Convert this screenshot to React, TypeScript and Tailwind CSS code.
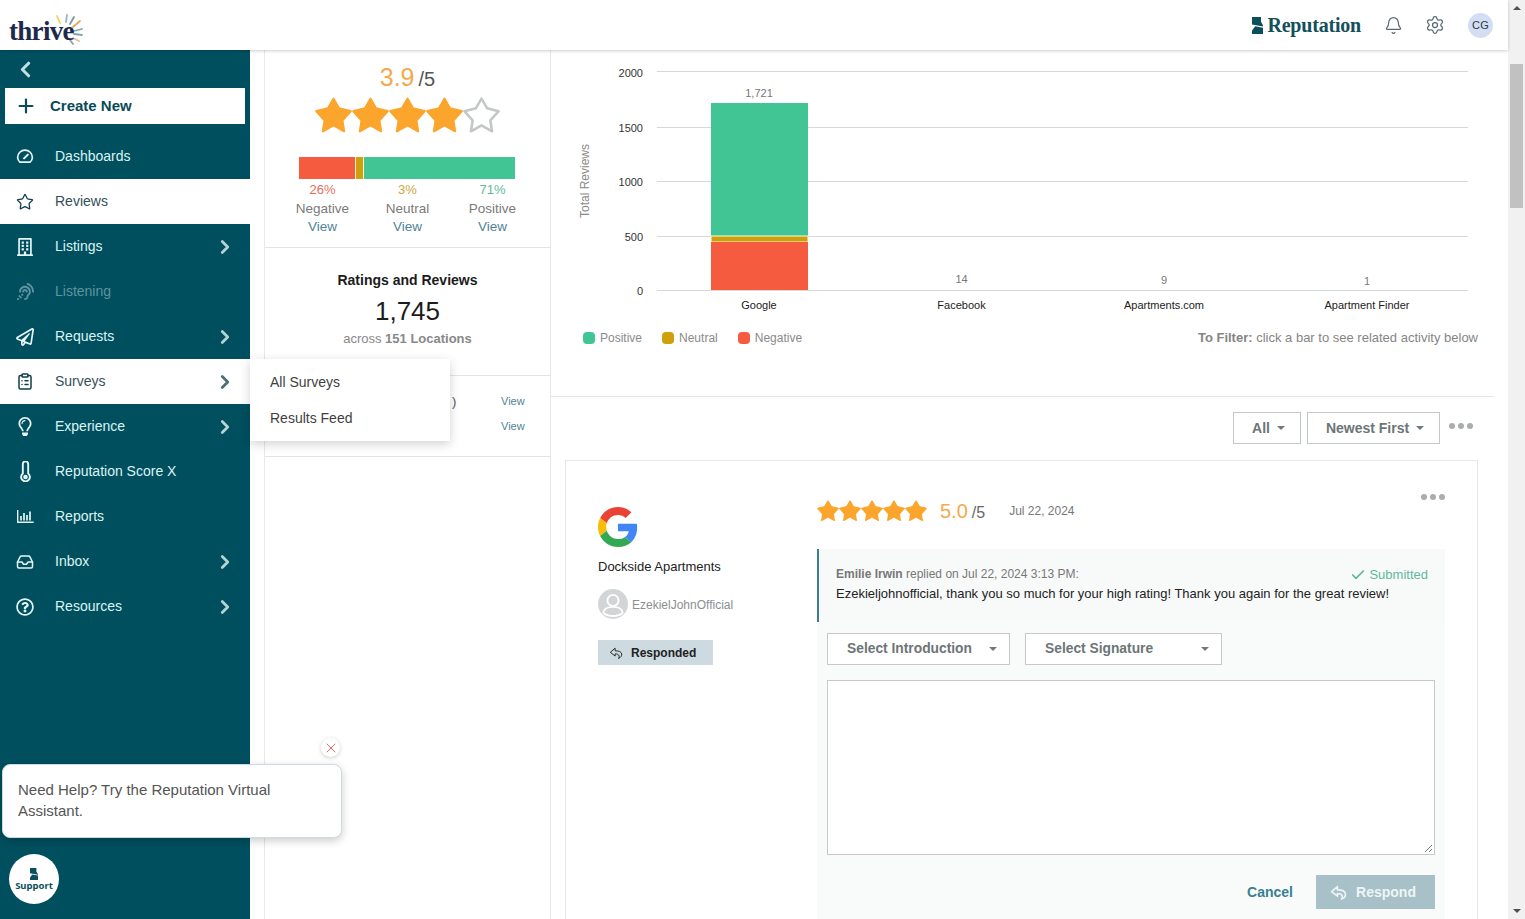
import React from "react";
import { Bell, Settings, ChevronLeft, ChevronRight, Plus, Star, ClipboardList, Check, X, Inbox } from "lucide-react";
import { FaAssistiveListeningSystems, FaRegPaperPlane, FaRegLightbulb, FaRegQuestionCircle, FaRegBuilding } from "react-icons/fa";

const STAR = "M12 2l3.23 5.55 6.77 1.71-4.83 5.44L18.17 21 12 17.5 5.83 21l.99-6.3L2 9.26l6.77-1.71z";

function RStar({ size, empty }: { size: number; empty?: boolean }) {
  return (
    <svg width={size} height={size} viewBox="1.2 1 21.6 21.6" className="shrink-0">
      <path d={STAR} fill={empty ? "none" : "#fca52d"} stroke={empty ? "#c4c7c8" : "#fca52d"} strokeWidth={empty ? 1.5 : 1.3} strokeLinejoin="round" />
    </svg>
  );
}

function RepMark({ h, color }: { h: number; color: string }) {
  return (
    <svg width={(h * 11) / 16} height={h} viewBox="0 0 11 16" className="shrink-0">
      <path d="M0 0H8.5V4.5L11 9 0 7z" fill={color} />
      <path d="M3 8.6L11 10.2V16H0V12.6z" fill={color} />
    </svg>
  );
}

function ReplyIcon({ size, sw }: { size: number; sw: number }) {
  return (
    <svg width={size} height={size} viewBox="0 0 16 16" fill="none" stroke="currentColor" strokeWidth={sw} strokeLinejoin="round" className="shrink-0">
      <path d="M7 2.5L1.5 7.2 7 11.5V9c2.6 0 4.2.7 4.6 2.5.2 1-.2 2-.8 2.7 2.8-1 4-3.1 3.7-5.2C14 6.500 11 5.500 7 5.500z" />
    </svg>
  );
}

function DashIcon() {
  return (
    <svg width="18" height="17" viewBox="0 0 18 18" fill="none" stroke="currentColor" strokeWidth="1.8">
      <path d="M3.6 15h10.800c1.600-1.300 2.400-3.100 2.400-5A7.800 7.800 0 0 0 1.200 10c0 1.900.8 3.700 2.400 5z" />
      <path d="M8 11l4-4" strokeWidth="2.2" strokeLinecap="round" />
    </svg>
  );
}

function ThermoIcon() {
  return (
    <svg width="17" height="21" viewBox="0 0 16 22" fill="none" stroke="currentColor" strokeWidth="2">
      <path d="M5.200 3.200a2.800 2.800 0 0 1 5.600 0v9.900a4.600 4.600 0 1 1-5.600 0z" />
      <circle cx="8" cy="16.800" r="2.400" fill="currentColor" stroke="none" />
    </svg>
  );
}

function ReportIcon() {
  return (
    <svg width="17" height="13" viewBox="0 0 17 13" fill="none" stroke="currentColor" strokeWidth="1.4">
      <path d="M.7 0v12.200h16" />
      <path d="M4 10.500V6M7 10.500V3M10 10.500V5M13 10.500V1.500" strokeWidth="1.700" />
    </svg>
  );
}

const NAV: { label: string; icon: React.ReactNode; arrow?: boolean; state?: "active" | "open" | "dim" }[] = [
  { label: "Dashboards", icon: <DashIcon /> },
  { label: "Reviews", icon: <Star size={18} strokeWidth={1.7} />, state: "active" },
  { label: "Listings", icon: <FaRegBuilding size={18} />, arrow: true },
  { label: "Listening", icon: <FaAssistiveListeningSystems size={17} />, state: "dim" },
  { label: "Requests", icon: <FaRegPaperPlane size={18} />, arrow: true },
  { label: "Surveys", icon: <ClipboardList size={19} strokeWidth={2} />, arrow: true, state: "open" },
  { label: "Experience", icon: <FaRegLightbulb size={19} />, arrow: true },
  { label: "Reputation Score X", icon: <ThermoIcon /> },
  { label: "Reports", icon: <ReportIcon /> },
  { label: "Inbox", icon: <Inbox size={18} strokeWidth={2} />, arrow: true },
  { label: "Resources", icon: <FaRegQuestionCircle size={18} />, arrow: true },
];

function Sidebar() {
  return (
    <aside className="w-[250px] shrink-0 bg-[#004f5f] flex flex-col">
      <div className="h-[38px] flex items-center pl-[13px] text-[#bfe0e2]">
        <ChevronLeft size={25} strokeWidth={3} />
      </div>
      <button className="h-[36px] mx-[5px] bg-white flex items-center pl-[10px] text-[#0b4a58] font-bold text-[15px] cursor-default">
        <Plus size={22} strokeWidth={2.4} className="mr-[13px]" />
        Create New
      </button>
      <nav className="mt-[10px] flex flex-col">
        {NAV.map((n) => {
          const light = n.state === "active" || n.state === "open";
          const tone = light ? "bg-white text-[#33505a]" : n.state === "dim" ? "text-[#5f939e]" : "text-[#dcf3f3]";
          const iconTone = light ? "text-[#0f3f4c]" : n.state === "dim" ? "text-[#5f939e]" : "text-[#e6f6f6]";
          return (
            <div key={n.label} className={`h-[45px] flex items-center text-[14px] ${tone}`}>
              <span className={`w-[18px] h-[20px] ml-[16px] mr-[21px] flex items-center justify-center ${iconTone}`}>{n.icon}</span>
              <span className="flex-1">{n.label}</span>
              {n.arrow && (
                <ChevronRight size={22} strokeWidth={3} className={`mr-[14px] ${light ? "text-[#4d6f78]" : "text-[#b4d3d6]"}`} />
              )}
            </div>
          );
        })}
      </nav>
    </aside>
  );
}

function Summary() {
  const cols = [
    { p: "26%", l: "Negative", c: "text-[#e0705a]" },
    { p: "3%", l: "Neutral", c: "text-[#cfa642]" },
    { p: "71%", l: "Positive", c: "text-[#62b99c]" },
  ];
  return (
    <section className="w-[287px] shrink-0 ml-[14px] border-x border-[#e8e8e8] h-[869px]">
      <div className="h-[198px] border-b border-[#e4e4e4] flex flex-col items-center pt-[9px]">
        <div className="h-[30px] flex items-baseline gap-[4px]">
          <span className="text-[25px] text-[#f5a94d]">3.9</span>
          <span className="text-[20px] text-[#555]">/5</span>
        </div>
        <div className="mt-[8px] flex">
          {[0, 1, 2, 3].map((i) => <RStar key={i} size={37} />)}
          <RStar size={37} empty />
        </div>
        <div className="mt-[23px] mr-[1px] w-[216px] h-[22px] flex">
          <div className="w-[56px] bg-[#f55c3f]" />
          <div className="w-[9px] bg-[#cf9f0d] border-x border-[#fff6c8]" />
          <div className="flex-1 bg-[#41c595]" />
        </div>
        <div className="w-[255px] grid grid-cols-3 text-center leading-[18.5px] mt-[2px]">
          {cols.map((c) => (
            <div key={c.l} className="flex flex-col">
              <span className={`text-[13px] ${c.c}`}>{c.p}</span>
              <span className="text-[13.5px] text-[#7a7a7a]">{c.l}</span>
              <span className="text-[13.5px] text-[#4f8494]">View</span>
            </div>
          ))}
        </div>
      </div>
      <div className="h-[128px] border-b border-[#e4e4e4] flex flex-col items-center pt-[23px]">
        <span className="text-[14px] font-bold text-[#1c1c1c] leading-[18px]">Ratings and Reviews</span>
        <span className="text-[26px] text-[#1c1c1c] leading-[32px] mt-[6px]">1,745</span>
        <span className="text-[13px] text-[#888] leading-[18px] mt-[3px]">across <b>151 Locations</b></span>
      </div>
      <div className="h-[81px] border-b border-[#e4e4e4] flex flex-col pt-[13px] pl-[187px] text-[11px] text-[#4f8494] leading-[25px]">
        <div className="flex"><span className="w-[49px] text-[#555] text-[13px]">)</span>View</div>
        <div className="pl-[49px]">View</div>
      </div>
    </section>
  );
}

function Chart() {
  const gy = [71, 127, 181, 236, 290];
  const ly = [73, 128, 182, 237, 291];
  const yl = ["2000", "1500", "1000", "500", "0"];
  const cats: [string, number, string, number][] = [
    ["Google", 759, "1,721", 93],
    ["Facebook", 961.5, "14", 279],
    ["Apartments.com", 1164, "9", 280],
    ["Apartment Finder", 1367, "1", 281],
  ];
  const x = (v: number) => v - 551;
  const y = (v: number) => v - 50;
  return (
    <svg width="943" height="270" viewBox="0 0 943 270" className="block" fontFamily="'Liberation Sans', Arial, sans-serif" fontSize="11">
      {gy.map((g) => (
        <line key={g} x1={x(657)} x2={x(1468)} y1={y(g) + 0.5} y2={y(g) + 0.5} stroke="#d6d9da" />
      ))}
      {ly.map((g, i) => (
        <text key={g} x={x(643)} y={y(g) + 4} textAnchor="end" fill="#333">{yl[i]}</text>
      ))}
      <text transform={`translate(${x(589)} ${y(181)}) rotate(-90)`} textAnchor="middle" fontSize="12" fill="#8a8a8a">Total Reviews</text>
      <rect x={x(711)} y={y(103)} width="97" height="133" fill="#41c595" />
      <rect x={x(711)} y={y(236)} width="97" height="6" fill="#cf9f0d" stroke="#fffbe0" strokeWidth="1" />
      <rect x={x(711)} y={y(242)} width="97" height="48" fill="#f55c3f" />
      {cats.map(([c, cx, v, vy]) => (
        <g key={c}>
          <text x={x(cx)} y={y(309)} textAnchor="middle" fill="#222">{c}</text>
          <text x={x(cx)} y={y(vy) + 4} textAnchor="middle" fill="#777">{v}</text>
        </g>
      ))}
    </svg>
  );
}

function Legend() {
  const items = [
    { l: "Positive", c: "bg-[#41c595]" },
    { l: "Neutral", c: "bg-[#cf9f0d]" },
    { l: "Negative", c: "bg-[#f55c3f]" },
  ];
  return (
    <div className="h-[36px] flex items-center pl-[32px] pr-[16px] text-[12px] text-[#8a8a8a]">
      <div className="flex gap-[20px]">
        {items.map((i) => (
          <div key={i.l} className="flex items-center gap-[5px]">
            <span className={`w-[12px] h-[12px] rounded-[4px] ${i.c}`} />
            {i.l}
          </div>
        ))}
      </div>
      <div className="ml-auto text-[13px] text-[#858585]"><b>To Filter:</b> click a bar to see related activity below</div>
    </div>
  );
}

function Caret() {
  return <span className="w-0 h-0 border-x-[4px] border-x-transparent border-t-[4px] border-t-[#707a7d]" />;
}

function Dots({ className }: { className?: string }) {
  return (
    <div className={`flex gap-[3px] ${className ?? ""}`}>
      <span className="w-[6px] h-[6px] rounded-full bg-[#a9adae]" />
      <span className="w-[6px] h-[6px] rounded-full bg-[#a9adae]" />
      <span className="w-[6px] h-[6px] rounded-full bg-[#a9adae]" />
    </div>
  );
}

function GoogleG() {
  return (
    <svg width="40" height="40" viewBox="0 0 48 48">
      <path fill="#EA4335" d="M24 9.5c3.54 0 6.71 1.22 9.21 3.6l6.85-6.85C35.9 2.38 30.47 0 24 0 14.62 0 6.51 5.38 2.56 13.22l7.98 6.19C12.43 13.72 17.74 9.5 24 9.5z" />
      <path fill="#4285F4" d="M46.98 24.55c0-1.57-.15-3.09-.38-4.55H24v9.02h12.94c-.58 2.96-2.26 5.48-4.78 7.18l7.73 6c4.51-4.18 7.09-10.36 7.09-17.65z" />
      <path fill="#FBBC05" d="M10.53 28.59c-.48-1.45-.76-2.99-.76-4.59s.27-3.14.76-4.59l-7.98-6.19C.92 16.46 0 20.12 0 24c0 3.88.92 7.54 2.56 10.78l7.97-6.19z" />
      <path fill="#34A853" d="M24 48c6.48 0 11.93-2.13 15.89-5.81l-7.73-6c-2.15 1.45-4.92 2.3-8.16 2.3-6.26 0-11.57-4.22-13.47-9.91l-7.98 6.19C6.51 42.62 14.62 48 24 48z" />
    </svg>
  );
}

function Avatar() {
  return (
    <svg width="30" height="30" viewBox="0 0 30 30" className="shrink-0">
      <circle cx="15" cy="15" r="15" fill="#d2d5d6" />
      <circle cx="15" cy="11.5" r="5.6" fill="none" stroke="#fff" strokeWidth="1.8" />
      <path d="M5.5 24c0-4 4-6.2 9.5-6.2s9.5 2.2 9.5 6.2c-2.5 2-6 3-9.500 3s-7-1-9.500-3z" fill="none" stroke="#fff" strokeWidth="1.8" />
    </svg>
  );
}

function SelectBtn({ label, w, gap }: { label: string; w: string; gap: string }) {
  return (
    <div className={`h-[32px] border border-[#c4c9ca] bg-white flex items-center pl-[19px] text-[13.8px] font-bold text-[#6d7577] ${w}`}>
      <span className={`pt-[1px] ${gap}`}>{label}</span>
      <Caret />
    </div>
  );
}

function ReviewCard() {
  return (
    <div className="ml-[14px] w-[913px] border border-[#e6e8e8] border-b-0 flex h-[500px]">
      <div className="w-[251px] shrink-0 pl-[32px] pt-[46px] flex flex-col items-start">
        <GoogleG />
        <div className="mt-[11px] h-[18px] text-[13px] leading-[18px] text-[#222]">Dockside Apartments</div>
        <div className="mt-[13px] flex items-center gap-[4px] text-[12px] text-[#8a8f90]">
          <Avatar /><span className="pt-[2px]">EzekielJohnOfficial</span>
        </div>
        <div className="mt-[21px] h-[25px] w-[115px] bg-[#cddbe0] flex items-center pl-[11px] gap-[8px] text-[12px] font-bold text-[#222]">
          <ReplyIcon size={14} sw={1.1} />Responded
        </div>
      </div>
      <div className="w-[628px] shrink-0 pt-[38px]">
        <div className="h-[24px] flex items-center">
          <div className="flex">{[0, 1, 2, 3, 4].map((i) => <RStar key={i} size={22} />)}</div>
          <span className="ml-[13px] text-[20px] text-[#f5a94d] leading-[24px]">5.0</span>
          <span className="ml-[4px] mt-[3px] text-[16px] text-[#666] leading-[20px]">/5</span>
          <span className="ml-[24px] text-[12px] text-[#777]">Jul 22, 2024</span>
          <Dots className="ml-auto -mt-[28px]" />
        </div>
        <div className="mt-[26px] h-[73px] bg-[#f8fafa] border-l-[2px] border-[#3b7f8f] pl-[17px] pr-[17px] pt-[16px] text-[12px] leading-[19px]">
          <div className="flex justify-between h-[19px]">
            <span className="text-[#777]"><b>Emilie Irwin</b> replied on Jul 22, 2024 3:13 PM:</span>
            <span className="flex items-center gap-[3px] text-[13px] text-[#62b99c]"><Check size={16} strokeWidth={2.6} />Submitted</span>
          </div>
          <div className="text-[13px] text-[#222]">Ezekieljohnofficial, thank you so much for your high rating! Thank you again for the great review!</div>
        </div>
        <div className="bg-[#f9fbfb] h-[297px] px-[10px] pt-[11px]">
          <div className="flex gap-[15px]">
            <SelectBtn label="Select Introduction" w="w-[183px]" gap="mr-[17px]" />
            <SelectBtn label="Select Signature" w="w-[197px]" gap="mr-[48px]" />
          </div>
          <div className="mt-[15px] h-[175px] border border-[#c4c9ca] bg-white relative">
            <svg width="9" height="9" viewBox="0 0 9 9" className="absolute right-[1px] bottom-[1px]" stroke="#777">
              <path d="M1 8l7-7M5 8l3-3" />
            </svg>
          </div>
          <div className="mt-[20px] flex items-center justify-end">
            <span className="text-[14px] font-bold text-[#3b7f8f] mr-[23px]">Cancel</span>
            <div className="w-[119px] h-[34px] bg-[#a8c1c8] flex items-center justify-center gap-[9px] pr-[5px] text-[14px] font-bold text-[#eef5f6]">
              <ReplyIcon size={17} sw={1.5} />Respond
            </div>
          </div>
        </div>
      </div>
    </div>
  );
}

function Rays() {
  const r: [number, number, number, number, string][] = [
    [60, 23, 57, 16, "#f3d05a"],
    [66, 22, 67, 15, "#9fb3c8"],
    [70, 24, 74, 17, "#7f97a3"],
    [73, 27, 80, 21, "#e8a55a"],
    [74, 31, 82, 29, "#7fa6a8"],
    [74, 34, 82, 35, "#7fa6a8"],
    [73, 38, 79, 41, "#e8b9a0"],
    [70, 40, 73, 44, "#8ca5b5"],
  ];
  return (
    <svg width="90" height="50" viewBox="0 0 90 50" className="absolute left-0 top-0">
      {r.map(([a, b, c, d, s], i) => (
        <line key={i} x1={a} y1={b} x2={c} y2={d} stroke={s} strokeWidth="1.8" strokeLinecap="round" />
      ))}
    </svg>
  );
}

export default function App() {
  return (
    <div className="relative w-[1525px] h-[919px] overflow-hidden flex bg-white font-['Liberation_Sans',Arial,sans-serif]">
      <div className="w-[1508px] shrink-0 flex flex-col">
        <header className="relative z-10 h-[50px] shrink-0 bg-white shadow-[0_1px_3px_rgba(0,0,0,0.2)] flex items-center">
          <div className="relative w-[90px] h-[50px]">
            <Rays />
            <span className="absolute left-[9px] top-[14px] font-['Liberation_Serif',serif] font-bold text-[27px] leading-[34px] text-[#1d2a4d] tracking-[-0.7px]">thrive</span>
          </div>
          <div className="ml-auto flex items-center mr-[15px]">
            <RepMark h={17} color="#0b4f5c" />
            <span className="ml-[4px] font-['Liberation_Serif',serif] font-bold text-[20px] text-[#14505c] tracking-[-0.2px]">Reputation</span>
            <Bell size={19} strokeWidth={1.5} className="ml-[23px] text-[#56686e]" />
            <Settings size={20} strokeWidth={1.5} className="ml-[22px] text-[#56686e]" />
            <span className="ml-[23px] w-[25px] h-[25px] rounded-full bg-[#d3def2] flex items-center justify-center text-[11px] text-[#2a3a44] tracking-[0.3px]">CG</span>
          </div>
        </header>
        <div className="flex flex-1 min-h-0">
          <Sidebar />
          <Summary />
          <main className="w-[943px] shrink-0">
            <Chart />
            <Legend />
            <div className="h-[41px] border-b border-[#e4e6e6]" />
            <div className="h-[63px] flex items-start justify-end pt-[15px] pr-[21px] gap-[6px]">
              <div className="w-[68px] h-[32px] border border-[#c4c9ca] flex items-center justify-center gap-[7px] pl-[3px] text-[14px] font-bold text-[#6d7577]">All<Caret /></div>
              <div className="w-[133px] h-[32px] border border-[#c4c9ca] flex items-center justify-center gap-[7px] pl-[3px] text-[14px] font-bold text-[#6d7577]">Newest First<Caret /></div>
              <Dots className="ml-[3px] mt-[11px]" />
            </div>
            <ReviewCard />
          </main>
        </div>
      </div>

      <div className="w-[17px] shrink-0 bg-[#f1f1f1] flex flex-col items-center relative">
        <span className="mt-[6px] w-0 h-0 border-x-[4px] border-x-transparent border-b-[4px] border-b-[#505050]" />
        <span className="mt-[54px] w-[13px] h-[144px] bg-[#c1c1c1]" />
        <span className="mt-auto mb-[6px] w-0 h-0 border-x-[4px] border-x-transparent border-t-[4px] border-t-[#505050]" />
      </div>

      {/* Surveys flyout */}
      <div className="absolute left-[250px] top-[359px] w-[200px] h-[82px] bg-white shadow-[0_3px_10px_rgba(0,0,0,0.18)] flex flex-col text-[14px] text-[#3f3f3f] pl-[20px] pt-[5px] leading-[36px]">
        <span>All Surveys</span>
        <span>Results Feed</span>
      </div>

      {/* Virtual assistant prompt */}
      <div className="absolute left-[321px] top-[738px] w-[19px] h-[19px] rounded-full bg-white shadow-[0_1px_4px_rgba(0,0,0,0.2)] flex items-center justify-center text-[#e8504a]">
        <X size={16} strokeWidth={1.3} />
      </div>
      <div className="absolute left-[2px] top-[764px] w-[340px] h-[74px] rounded-[8px] bg-white border border-[#c9dde0] shadow-[0_3px_8px_rgba(0,0,0,0.2)] px-[15px] pt-[14px] text-[15px] leading-[21px] text-[#555]">
        Need Help? Try the Reputation Virtual Assistant.
      </div>
      <div className="absolute left-[9px] top-[854px] w-[50px] h-[50px] rounded-full bg-white flex flex-col items-center justify-center">
        <RepMark h={12} color="#0b4f5c" />
        <span className="text-[9.500px] font-bold text-[#0b4f5c] leading-[11px] font-['Noto_Sans',sans-serif]">Support</span>
      </div>
    </div>
  );
}
